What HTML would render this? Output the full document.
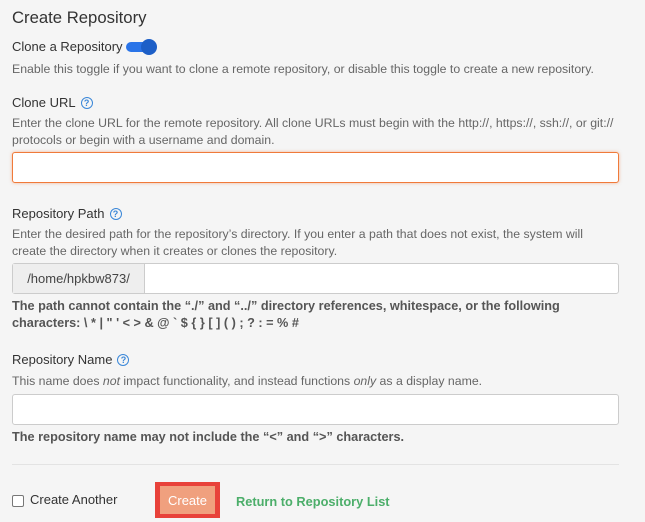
<!DOCTYPE html><html><head><style>
body{margin:0;width:645px;height:522px;background:#f5f5f5;font-family:"Liberation Sans",sans-serif;color:#333;position:relative;overflow:hidden}
.a{position:absolute;white-space:nowrap}
.h{font-size:16.7px;color:#333}
.l{font-size:13px;color:#333}
.s{font-size:12.3px;color:#666}
.b{font-size:12.7px;font-weight:bold;color:#555}
.q{display:inline-block;width:10px;height:10px;border:1.3px solid #3a87d8;border-radius:50%;color:#3a87d8;font-size:9px;line-height:10px;text-align:center;font-weight:bold;vertical-align:1px;margin-left:5px}
.in{position:absolute;background:#fff;border:1px solid #ccc;border-radius:3px;box-sizing:border-box}
</style></head><body>
<div class="a h" style="left:12px;top:8px">Create Repository</div>
<div class="a l" style="left:12px;top:39px">Clone a Repository</div>
<div class="a" style="left:126px;top:42px;width:28px;height:10px;background:#2a74e8;border-radius:5px"></div>
<div class="a" style="left:141px;top:39px;width:16px;height:16px;background:#1d5fc7;border-radius:50%"></div>
<div class="a s" style="left:12px;top:62px">Enable this toggle if you want to clone a remote repository, or disable this toggle to create a new repository.</div>
<div class="a l" style="left:12px;top:95px">Clone URL<span class="q">?</span></div>
<div class="a s" style="left:12px;top:115px;line-height:17px">Enter the clone URL for the remote repository. All clone URLs must begin with the http://, https://, ssh://, or git://<br>protocols or begin with a username and domain.</div>
<div class="in" style="left:12px;top:152px;width:607px;height:31px;border-color:#f07a3a;box-shadow:0 0 3px rgba(240,122,58,.5)"></div>
<div class="a l" style="left:12px;top:206px">Repository Path<span class="q">?</span></div>
<div class="a s" style="left:12px;top:226px;line-height:17px">Enter the desired path for the repository’s directory. If you enter a path that does not exist, the system will<br>create the directory when it creates or clones the repository.</div>
<div class="in" style="left:12px;top:263px;width:607px;height:31px"></div>
<div class="a" style="left:13px;top:264px;width:131px;height:29px;background:#eee;border-right:1px solid #ccc;font-size:13px;line-height:29px;text-align:center;color:#444">/home/hpkbw873/</div>
<div class="a b" style="left:12px;top:298px;line-height:17px">The path cannot contain the “./” and “../” directory references, whitespace, or the following<br>characters: \ * | " ' &lt; &gt; &amp; @ ` $ { } [ ] ( ) ; ? : = % #</div>
<div class="a l" style="left:12px;top:352px">Repository Name<span class="q">?</span></div>
<div class="a s" style="left:12px;top:374px">This name does <i>not</i> impact functionality, and instead functions <i>only</i> as a display name.</div>
<div class="in" style="left:12px;top:394px;width:607px;height:31px"></div>
<div class="a b" style="left:12px;top:430px">The repository name may <b>not</b> include the “&lt;” and “&gt;” characters.</div>
<div class="a" style="left:12px;top:464px;width:607px;height:1px;background:#e3e3e3"></div>
<div class="a" style="left:12px;top:495px;width:10px;height:10px;border:1px solid #777;border-radius:2px;background:#fff"></div>
<div class="a l" style="left:30px;top:492px">Create Another</div>
<div class="a" style="left:155px;top:482px;width:65px;height:36px;background:#e8423a"></div>
<div class="a" style="left:160px;top:486px;width:55px;height:28px;background:#f0a07e;color:#fff;font-size:13px;line-height:30px;text-align:center">Create</div>
<div class="a" style="left:236px;top:494px;font-size:12.8px;font-weight:bold;color:#4cae6a">Return to Repository List</div>
</body></html>
